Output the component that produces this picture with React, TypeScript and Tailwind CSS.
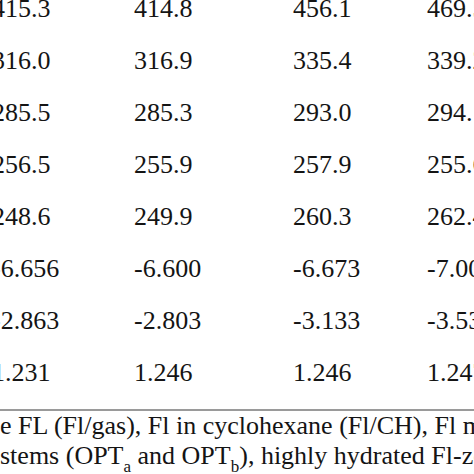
import React from "react";

const cols: string[][] = [
  ["415.3", "316.0", "285.5", "256.5", "248.6", "-6.656", "-2.863", "1.231"],
  ["414.8", "316.9", "285.3", "255.9", "249.9", "-6.600", "-2.803", "1.246"],
  ["456.1", "335.4", "293.0", "257.9", "260.3", "-6.673", "-3.133", "1.246"],
  ["469.5", "339.2", "294.1", "255.6", "262.4", "-7.003", "-3.535", "1.247"],
];

export default function App() {
  const rows = cols[0].map((_, r) => cols.map((c) => c[r]));
  return (
    <div
      className="w-[474px] h-[474px] overflow-hidden bg-white text-[#141414]"
      style={{ fontFamily: '"Liberation Serif", "Times New Roman", serif' }}
    >
      <div className="mt-[-17px] ml-[-8px] w-[520px]">
        {rows.map((row, i) => (
          <div
            key={i}
            className="grid grid-cols-[142px_159px_134px_1fr] h-[52px] text-[26px] leading-[52px] whitespace-nowrap"
          >
            {row.map((v, j) => (
              <div key={j}>{v}</div>
            ))}
          </div>
        ))}
      </div>
      <div className="mt-[10px] h-[2px] bg-[#9a9a9a]" />
      <div className="text-[26px] leading-[30px] whitespace-nowrap">
        <div>e FL (Fl/gas), Fl in cyclohexane (Fl/CH), Fl molecule</div>
        <div>
          stems (OPT<sub className="text-[17px] align-[-4px] leading-none">a</sub> and OPT
          <sub className="text-[17px] align-[-4px] leading-none">b</sub>), highly hydrated Fl-zeolite
        </div>
      </div>
    </div>
  );
}
